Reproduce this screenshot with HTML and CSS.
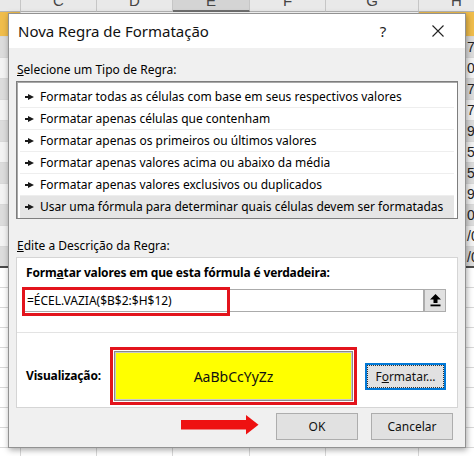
FILE: index.html
```html
<!DOCTYPE html>
<html lang="pt">
<head>
<meta charset="utf-8">
<title>Nova Regra de Formatação</title>
<link rel="stylesheet" href="styles.css">
</head>
<body>
<div class="sheet">
  <div class="hc"></div><div class="hc"><span>C</span></div><div class="hc"><span>D</span></div><div class="hc sel"><span>E</span></div><div class="hc"><span>F</span></div><div class="hc"><span>G</span></div><div class="hc"><span>H</span></div>
  <div class="c gold"></div><div class="c mid"></div><div class="c h gold"></div>
  <div class="c g"></div><div class="c mid"></div><div class="c h g">7</div>
  <div class="c l"></div><div class="c mid"></div><div class="c h l">0</div>
  <div class="c g"></div><div class="c mid"></div><div class="c h g">7</div>
  <div class="c l"></div><div class="c mid"></div><div class="c h l">7</div>
  <div class="c g"></div><div class="c mid"></div><div class="c h g">9</div>
  <div class="c l"></div><div class="c mid"></div><div class="c h l">5</div>
  <div class="c g"></div><div class="c mid"></div><div class="c h g">5</div>
  <div class="c l"></div><div class="c mid"></div><div class="c h l">9</div>
  <div class="c g"></div><div class="c mid"></div><div class="c h g">0</div>
  <div class="c l"></div><div class="c mid"></div><div class="c h l">/0</div>
  <div class="c g last"></div><div class="c mid last"></div><div class="c h g last">/0</div>
  <div class="c"></div><div class="c"></div><div class="c"></div><div class="c"></div><div class="c"></div><div class="c"></div><div class="c"></div>
  <div class="c"></div><div class="c"></div><div class="c"></div><div class="c"></div><div class="c"></div><div class="c"></div><div class="c"></div>
  <div class="c"></div><div class="c"></div><div class="c"></div><div class="c"></div><div class="c"></div><div class="c"></div><div class="c"></div>
  <div class="c"></div><div class="c"></div><div class="c"></div><div class="c"></div><div class="c"></div><div class="c"></div><div class="c"></div>
  <div class="c"></div><div class="c"></div><div class="c"></div><div class="c"></div><div class="c"></div><div class="c"></div><div class="c"></div>
  <div class="c"></div><div class="c"></div><div class="c"></div><div class="c"></div><div class="c"></div><div class="c"></div><div class="c"></div>
  <div class="c"></div><div class="c"></div><div class="c"></div><div class="c"></div><div class="c"></div><div class="c"></div><div class="c"></div>
  <div class="c"></div><div class="c"></div><div class="c"></div><div class="c"></div><div class="c"></div><div class="c"></div><div class="c"></div>
  <div class="c"></div><div class="c"></div><div class="c"></div><div class="c"></div><div class="c"></div><div class="c"></div><div class="c"></div>
  <div class="c"></div><div class="c"></div><div class="c"></div><div class="c"></div><div class="c"></div><div class="c"></div><div class="c"></div>
</div>

<div class="dialog">
  <div class="titlebar">
    <div class="title">Nova Regra de Formatação</div>
    <div class="tb-btn help">?</div>
    <div class="tb-btn close">
      <svg width="12" height="12" viewBox="0 0 12 12"><path d="M0.5 0.5 L11.5 11.5 M11.5 0.5 L0.5 11.5" stroke="#222" stroke-width="1.1" fill="none"/></svg>
    </div>
  </div>
  <div class="dbody">
    <div class="label"><u>S</u>elecione um Tipo de Regra:</div>
    <ul class="rules">
      <li><svg class="ptr" width="9" height="6" viewBox="0 0 9 6"><rect x="0" y="2" width="3.5" height="2" fill="#1a1a1a"/><path d="M3 0 L9 3 L3 6 Z" fill="#1a1a1a"/></svg>Formatar todas as células com base em seus respectivos valores</li>
      <li><svg class="ptr" width="9" height="6" viewBox="0 0 9 6"><rect x="0" y="2" width="3.5" height="2" fill="#1a1a1a"/><path d="M3 0 L9 3 L3 6 Z" fill="#1a1a1a"/></svg>Formatar apenas células que contenham</li>
      <li><svg class="ptr" width="9" height="6" viewBox="0 0 9 6"><rect x="0" y="2" width="3.5" height="2" fill="#1a1a1a"/><path d="M3 0 L9 3 L3 6 Z" fill="#1a1a1a"/></svg>Formatar apenas os primeiros ou últimos valores</li>
      <li><svg class="ptr" width="9" height="6" viewBox="0 0 9 6"><rect x="0" y="2" width="3.5" height="2" fill="#1a1a1a"/><path d="M3 0 L9 3 L3 6 Z" fill="#1a1a1a"/></svg>Formatar apenas valores acima ou abaixo da média</li>
      <li><svg class="ptr" width="9" height="6" viewBox="0 0 9 6"><rect x="0" y="2" width="3.5" height="2" fill="#1a1a1a"/><path d="M3 0 L9 3 L3 6 Z" fill="#1a1a1a"/></svg>Formatar apenas valores exclusivos ou duplicados</li>
      <li class="selected"><svg class="ptr" width="9" height="6" viewBox="0 0 9 6"><rect x="0" y="2" width="3.5" height="2" fill="#1a1a1a"/><path d="M3 0 L9 3 L3 6 Z" fill="#1a1a1a"/></svg>Usar uma fórmula para determinar quais células devem ser formatadas</li>
    </ul>
    <div class="label label2"><u>E</u>dite a Descrição da Regra:</div>
    <div class="panel">
      <div class="bold-label">Form<u>a</u>tar valores em que esta fórmula é verdadeira:</div>
      <div class="formula-row">
        <div class="formula-input">=ÉCEL.VAZIA($B$2:$H$12)</div>
        <div class="ref-btn">
          <svg width="11" height="13" viewBox="0 0 11 13"><path d="M5.5 0 L11 5.5 H7.5 V9 H3.5 V5.5 H0 Z" fill="#000"/><rect x="0.5" y="10.5" width="10" height="1.8" fill="#000"/></svg>
        </div>
        <div class="highlight"></div>
      </div>
      <div class="sep"></div>
      <div class="preview-row">
        <div class="bold-label prev-label">Visualização:</div>
        <div class="preview-frame">
          <div class="preview">AaBbCcYyZz</div>
        </div>
        <div class="btn format-btn">F<u>o</u>rmatar...</div>
      </div>
    </div>
    <div class="footer">
      <svg class="arrow" width="78" height="20" viewBox="0 0 78 20"><rect x="0" y="5" width="67" height="9.5" fill="#ee1111"/><path d="M65 0 L77.5 9.75 L65 19.5 Z" fill="#ee1111"/></svg>
      <div class="btn ok">OK</div>
      <div class="btn cancel">Cancelar</div>
    </div>
  </div>
</div>
</body>
</html>
```

FILE: styles.css
```css
* { box-sizing: border-box; margin: 0; padding: 0; }
html, body { width: 474px; height: 456px; overflow: hidden; background: #fff; }
body {
  position: relative;
  font-family: "Noto Sans", "Open Sans", sans-serif;
  font-size: 12px;
  color: #000;
}

/* ---------- spreadsheet behind ---------- */
.sheet {
  display: grid;
  grid-template-columns: 21px 76px 76px 77px 76px 93px 76px;
  grid-template-rows: 12px 25px repeat(11, 21px) repeat(10, 20px);
  width: 495px;
  font-family: "Liberation Sans", sans-serif;
  font-size: 14px;
  color: #222;
}
.hc {
  background: #e9e9e9;
  border-right: 1px solid #c6c6c6;
  border-bottom: 1px solid #b5b5b5;
  overflow: hidden;
  text-align: center;
  color: #444;
  font-size: 15px;
  line-height: 12px;
}
.hc span { display: block; margin-top: -5px; }
.hc.sel { background: #d4d4d4; border-bottom: 2px solid #6f6f6f; }
.c {
  border-right: 1px solid #d8d8d8;
  border-bottom: 1px solid #d8d8d8;
  overflow: hidden;
  white-space: nowrap;
}
.mid { grid-column: span 5; }
.gold { background: #f0bd4b; }
.g { background: #dcdcdc; }
.l { background: #f3f3f3; }
.h { padding-left: 48px; line-height: 20px; }
.last { border-bottom: 2px solid #4a4a4a; }

/* ---------- dialog ---------- */
.dialog {
  position: absolute;
  left: 8px;
  top: 13px;
  width: 458px;
  height: 435px;
  background: #f0f0f0;
  border: 1px solid #929292;
  box-shadow: 1px 2px 6px rgba(0, 0, 0, 0.35);
  display: flex;
  flex-direction: column;
}
.titlebar {
  flex: none;
  height: 34px;
  background: #fff;
  display: flex;
  align-items: center;
  padding-left: 9px;
  padding-right: 12px;
}
.title { flex: 1; font-size: 15px; color: #111; }
.tb-btn { width: 30px; text-align: center; }
.help { font-size: 15px; color: #222; margin-right: 25px; }
.close { display: flex; justify-content: center; align-items: center; }

.dbody {
  flex: 1;
  padding: 0 7px;
  display: flex;
  flex-direction: column;
}
.label { margin-top: 14px; line-height: 16px; padding-left: 1px; }
.label2 { margin-top: 19px; }

.rules {
  list-style: none;
  margin-top: 3px;
  height: 138px;
  background: #fff;
  border: 1px solid #7e7e7e;
  box-shadow: inset 1px 1px 0 #a8a8a8;
  padding: 4px 3px 0 3px;
}
.rules li {
  height: 22px;
  line-height: 21px;
  border-bottom: 1px solid #eeeeee;
  padding-left: 5px;
  display: flex;
  align-items: center;
  white-space: nowrap;
}
.rules li.selected { background: #e5e5e5; border-bottom-color: #e5e5e5; }
.ptr { margin-right: 6px; flex: none; }

.panel {
  margin-top: 3px;
  height: 151px;
  background: #fff;
  border: 1px solid #d5d5d5;
  padding-top: 7px;
  display: flex;
  flex-direction: column;
}
.bold-label {
  font-weight: bold;
  line-height: 16px;
  padding-left: 9px;
  white-space: nowrap;
  letter-spacing: -0.15px;
}
.formula-row {
  position: relative;
  margin-top: 8px;
  margin-left: 7px;
  width: 422px;
  height: 23px;
  display: flex;
}
.formula-input {
  flex: 1;
  border: 1px solid #ababab;
  padding-left: 2px;
  line-height: 21px;
  background: #fff;
}
.ref-btn {
  width: 22px;
  background: #e1e1e1;
  border: 1px solid #adadad;
  display: flex;
  align-items: center;
  justify-content: center;
}
.highlight {
  position: absolute;
  left: -2px;
  top: -2px;
  width: 208px;
  height: 29px;
  border: 3px solid #e3141c;
}
.sep { margin-top: 20px; height: 1px; background: #e3e3e3; }

.preview-row {
  margin-top: 14px;
  display: flex;
  align-items: center;
}
.prev-label { width: 93px; flex: none; }
.preview-frame {
  flex: none;
  width: 247px;
  height: 58px;
  border: 3px solid #e3141c;
  padding: 1px;
  background: #fff;
}
.preview {
  height: 100%;
  background: #ffff00;
  border: 1px solid #8a8a8a;
  box-shadow: inset 0 0 0 1px #c9c9c9;
  display: flex;
  align-items: center;
  justify-content: center;
  font-size: 14px;
  color: #111;
}
.btn {
  background: #e1e1e1;
  border: 1px solid #adadad;
  display: flex;
  align-items: center;
  justify-content: center;
  color: #111;
}
.format-btn {
  flex: none;
  margin-left: 8px;
  width: 81px;
  height: 27px;
  border: 1px solid #0078d7;
  box-shadow: inset 0 0 0 1px #0078d7;
  outline: 1px dotted #333;
  outline-offset: -3px;
}
.footer {
  display: flex;
  justify-content: flex-end;
  align-items: flex-start;
  padding-top: 5px;
  padding-right: 5px;
}
.arrow { margin-top: 2px; margin-right: 17px; }
.ok, .cancel { width: 82px; height: 27px; }
.ok { margin-right: 13px; }
```
